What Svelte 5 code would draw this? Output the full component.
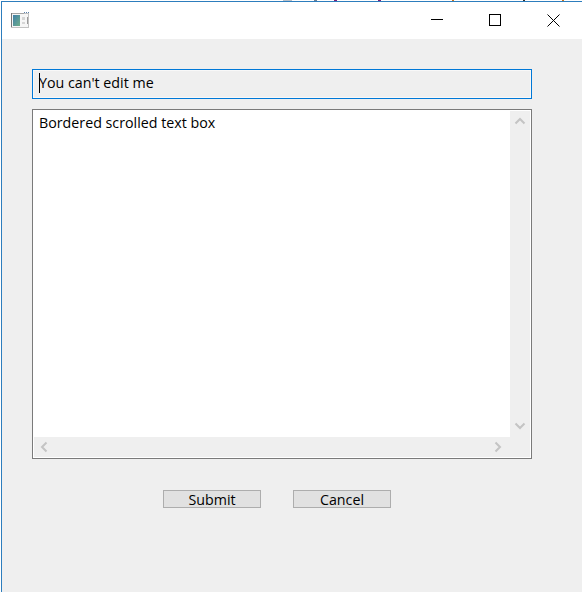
<script>
  const topMarks = [
    { left: 283, width: 9, color: '#b9c0c8' },
    { left: 314, width: 3, color: '#6f7f92' },
    { left: 334, width: 3, color: '#7a1f7a' },
    { left: 378, width: 3, color: '#7a1f7a' },
    { left: 452, width: 2, color: '#c8751f' },
    { left: 523, width: 2, color: '#33302e' },
    { left: 562, width: 2, color: '#c8751f' }
  ];
</script>

<div class="screen">
  <div class="strip">
    {#each topMarks as m}
      <span class="mark" style="left:{m.left}px;width:{m.width}px;background:{m.color}"></span>
    {/each}
  </div>
  <div class="window">
    <header class="titlebar">
      <svg class="appicon" width="18" height="16" viewBox="0 0 18 16">
        <defs>
          <linearGradient id="g" x1="0" y1="0" x2="1" y2="1">
            <stop offset="0" stop-color="#3f7fa8" />
            <stop offset="1" stop-color="#6fae8a" />
          </linearGradient>
        </defs>
        <rect x="0.5" y="1.5" width="17" height="14" fill="#f6f6f6" stroke="#c2c2c2" />
        <rect x="0" y="1" width="1" height="14" fill="#777" />
        <rect x="1" y="1" width="12" height="1" fill="#a5a5a5" />
        <rect x="2" y="3" width="7" height="11" fill="url(#g)" />
        <rect x="11" y="5" width="3" height="3" fill="#d6d6d6" />
        <rect x="11" y="10" width="3" height="2" fill="#d6d6d6" />
        <rect x="16" y="5" width="1" height="7" fill="#9a9a9a" />
        <rect x="13" y="0" width="1" height="1" fill="#5a7fa8" />
        <rect x="15" y="0" width="1" height="1" fill="#5a7fa8" />
        <rect x="17" y="0" width="1" height="1" fill="#5a7fa8" />
      </svg>
      <div class="controls">
        <svg width="12" height="12" viewBox="0 0 12 12" class="ctl min"><path d="M0 5.5H12" stroke="#000" fill="none" /></svg>
        <svg width="12" height="12" viewBox="0 0 12 12" class="ctl max"><rect x="0.5" y="0.5" width="11" height="11" stroke="#000" fill="none" /></svg>
        <svg width="13" height="13" viewBox="0 0 13 13" class="ctl close"><path d="M0.5 0.5L12.5 12.5M12.5 0.5L0.5 12.5" stroke="#000" fill="none" /></svg>
      </div>
    </header>

    <main class="content">
      <div class="readonly">
        <span class="caret"></span>
        <span class="value">You can't edit me</span>
      </div>

      <div class="scrollbox">
        <div class="inner">
          <div class="textarea">Bordered scrolled text box</div>
          <div class="vbar">
            <svg width="12" height="8" viewBox="0 0 12 8"><path d="M1.5 6.5L6 2L10.5 6.5" /></svg>
            <svg width="12" height="8" viewBox="0 0 12 8"><path d="M1.5 1.5L6 6L10.5 1.5" /></svg>
          </div>
          <div class="hbar">
            <svg width="8" height="12" viewBox="0 0 8 12"><path d="M6.5 1.5L2 6L6.5 10.5" /></svg>
            <svg width="8" height="12" viewBox="0 0 8 12"><path d="M1.5 1.5L6 6L1.5 10.5" /></svg>
          </div>
          <div class="corner"></div>
        </div>
      </div>

      <div class="actions">
        <button type="button">Submit</button>
        <button type="button">Cancel</button>
      </div>
    </main>
  </div>
</div>

<style>
  :global(body) {
    margin: 0;
    background: #fff;
  }
  .screen {
    width: 582px;
    height: 592px;
    overflow: hidden;
    display: flex;
    flex-direction: column;
    font-family: "Open Sans", "Noto Sans", sans-serif;
    font-size: 14.25px;
    color: #000;
    position: relative;
  }
  .strip {
    height: 1px;
    position: relative;
    flex: none;
  }
  .mark {
    position: absolute;
    top: 0;
    height: 1px;
  }
  .window {
    flex: 1;
    margin-left: 1px;
    border-left: 1px solid #2d7dbd;
    border-top: 1px solid #2d7dbd;
    display: flex;
    flex-direction: column;
    min-height: 0;
  }
  .titlebar {
    height: 37px;
    flex: none;
    background: #fff;
    display: flex;
    align-items: center;
    justify-content: space-between;
    position: relative;
  }
  .appicon {
    margin-left: 9px;
    margin-top: -2px;
  }
  .controls {
    display: flex;
    align-items: center;
    margin-right: 22px;
    margin-top: -1px;
  }
  .min { margin-right: 46px; }
  .max { margin-right: 46px; }
  .content {
    flex: 1;
    background: #efefef;
    padding: 30px 0 0 30px;
  }
  .readonly {
    width: 500px;
    height: 30px;
    box-sizing: border-box;
    border: 1px solid #0078d7;
    box-shadow: inset 0 0 0 1px #f8f8f8;
    background: #efefef;
    display: flex;
    align-items: center;
    padding: 0 0 2px 6px;
    line-height: 20px;
    position: relative;
  }
  .caret {
    position: absolute;
    left: 6px;
    top: 3px;
    width: 1px;
    height: 20px;
    background: #000;
  }
  .scrollbox {
    width: 500px;
    height: 350px;
    box-sizing: border-box;
    margin-top: 10px;
    border: 1px solid #7a7a7a;
    background: #fff;
    padding: 1px;
  }
  .inner {
    display: grid;
    grid-template-columns: 1fr 20px;
    grid-template-rows: 1fr 20px;
    height: 100%;
  }
  .textarea {
    background: #fff;
    padding: 2px 0 0 5px;
    line-height: 20px;
  }
  .vbar {
    background: #efefef;
    display: flex;
    flex-direction: column;
    justify-content: space-between;
    align-items: center;
    padding: 6px 0 7px;
  }
  .hbar {
    background: #efefef;
    display: flex;
    justify-content: space-between;
    align-items: center;
    padding: 0 8px 0 6px;
  }
  .corner {
    background: #efefef;
  }
  svg path {
    fill: none;
  }
  .vbar path,
  .hbar path {
    stroke: #c4c4c4;
    stroke-width: 2;
  }
  .actions {
    display: flex;
    gap: 32px;
    margin: 31px 0 0 131px;
  }
  button {
    width: 98px;
    height: 18px;
    box-sizing: border-box;
    padding: 1px 0 0;
    margin: 0;
    border: 1px solid #adadad;
    background: #e1e1e1;
    font: inherit;
    line-height: 15px;
    color: #000;
  }
</style>
